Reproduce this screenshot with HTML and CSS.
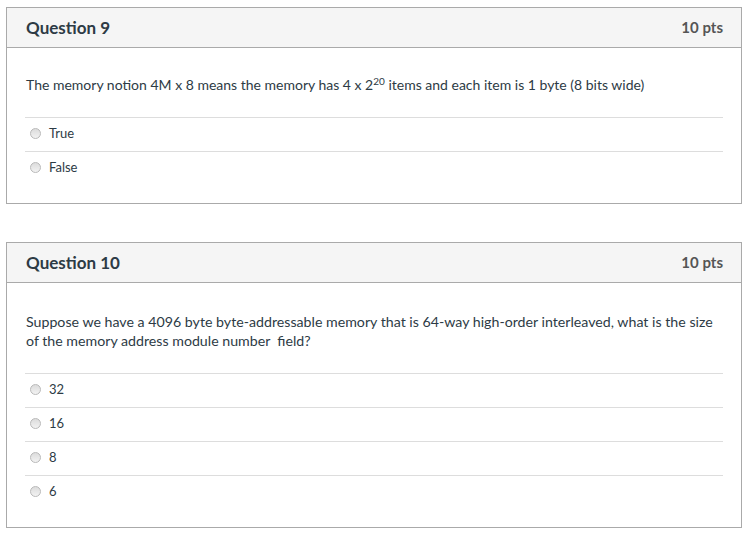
FILE: index.html
```html
<!DOCTYPE html>
<html>
<head>
<meta charset="utf-8">
<link rel="stylesheet" href="styles.css">
</head>
<body>
<div class="page">
  <div class="question">
    <div class="header">
      <span class="title">Question 9</span>
      <span class="pts">10 pts</span>
    </div>
    <div class="content">
      <div class="qtext q9">The memory notion 4M x 8 means the memory has 4 x 2<sup>20</sup> items and each item is 1 byte (8 bits wide)</div>
      <div class="answers">
        <div class="answer"><span class="radio"></span><span class="label">True</span></div>
        <div class="answer"><span class="radio"></span><span class="label">False</span></div>
      </div>
    </div>
  </div>
  <div class="question">
    <div class="header">
      <span class="title">Question 10</span>
      <span class="pts">10 pts</span>
    </div>
    <div class="content">
      <div class="qtext q10">Suppose we have a 4096 byte byte-addressable memory that is 64-way high-order interleaved, what is the size of the memory address module number&nbsp; field?</div>
      <div class="answers">
        <div class="answer"><span class="radio"></span><span class="label">32</span></div>
        <div class="answer"><span class="radio"></span><span class="label">16</span></div>
        <div class="answer"><span class="radio"></span><span class="label">8</span></div>
        <div class="answer"><span class="radio"></span><span class="label">6</span></div>
      </div>
    </div>
  </div>
</div>
</body>
</html>
```

FILE: styles.css
```css
html, body {
  margin: 0;
  padding: 0;
  background: #fff;
}
body {
  font-family: Lato, "Liberation Sans", sans-serif;
  color: #2d3b45;
}
.page {
  padding: 7px 6px 0 6px;
  display: flex;
  flex-direction: column;
  gap: 38px;
}
.question {
  border: 1px solid #aaaaaa;
}
.header {
  display: flex;
  justify-content: space-between;
  align-items: center;
  height: 39px;
  padding: 0 18px 1px 19px;
  box-sizing: border-box;
  height: 40px;
  background: #f5f5f5;
  border-bottom: 1px solid #aaaaaa;
}
.title {
  font-size: 17px;
  font-weight: 700;
  color: #2d3b45;
}
.pts {
  font-size: 15px;
  font-weight: 700;
  color: #555555;
}
.content {
  padding: 0 18px 18px 18px;
}
.qtext {
  font-size: 14px;
  line-height: 19px;
  padding-left: 1px;
}
.q9 {
  padding-top: 27px;
  padding-bottom: 23px;
}
.q10 {
  font-size: 14.2px;
  padding-top: 29px;
  padding-bottom: 23px;
}
sup {
  font-size: 10px;
  line-height: 0;
  vertical-align: 5px;
}
.answer {
  display: flex;
  align-items: center;
  height: 33px;
  padding-bottom: 3px;
  box-sizing: content-box;
  height: 30px;
  border-top: 1px solid #dddddd;
}
.radio {
  width: 9px;
  height: 9px;
  margin-left: 5px;
  margin-top: 1px;
  border-radius: 50%;
  border: 1px solid #b9b9b9;
  background: linear-gradient(#dcdcdc, #f2f2f2);
  flex: none;
}
.label {
  margin-left: 8px;
  font-size: 13px;
  color: #2d3b45;
}
```
